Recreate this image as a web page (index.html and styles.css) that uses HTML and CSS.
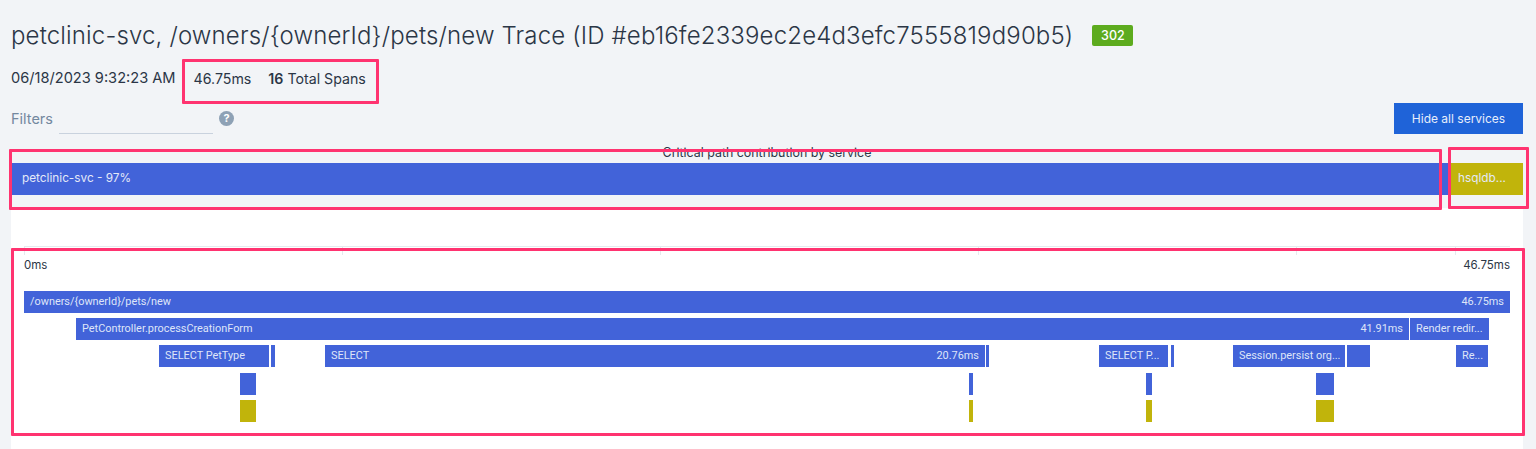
FILE: index.html
```html
<!DOCTYPE html>
<html lang="en">
<head>
<meta charset="utf-8">
<title>Trace</title>
<link rel="stylesheet" href="styles.css">
</head>
<body>
<main class="page">
  <header class="head">
    <h1 class="title">petclinic-svc, /owners/{ownerId}/pets/new Trace (ID #eb16fe2339ec2e4d3efc7555819d90b5)</h1>
    <span class="status">302</span>
  </header>
  <div class="meta">
    <span class="date">06/18/2023 9:32:23 AM</span>
    <span class="duration">46.75ms</span>
    <span class="spans"><b>16</b> Total Spans</span>
  </div>
  <div class="filters">
    <label class="filter-label">Filters</label>
    <span class="filter-input"></span>
    <span class="help">?</span>
    <button class="hide-btn">Hide all services</button>
  </div>
  <section class="critical">
    <div class="critical-title">Critical path contribution by service</div>
    <div class="critical-bar">
      <div class="seg seg-main">petclinic-svc - 97%</div>
      <div class="seg seg-db">hsqldb...</div>
    </div>
  </section>
  <section class="trace">
    <div class="ticks">
      <i class="tick" style="left:0"></i>
      <i class="tick" style="left:318px"></i>
      <i class="tick" style="left:636px"></i>
      <i class="tick" style="left:954px"></i>
      <i class="tick" style="left:1272px"></i>
      <i class="tick" style="left:1431px"></i>
    </div>
    <div class="scale"><span>0ms</span><span>46.75ms</span></div>
    <div class="rows">
      <div class="row">
        <div class="span" style="left:0;width:1486px"><span class="name">/owners/{ownerId}/pets/new</span><span>46.75ms</span></div>
      </div>
      <div class="row">
        <div class="span" style="left:52px;width:1333px"><span class="name">PetController.processCreationForm</span><span>41.91ms</span></div>
        <div class="span" style="left:1386px;width:79px"><span class="name">Render redir...</span></div>
      </div>
      <div class="row">
        <div class="span" style="left:135px;width:110px"><span class="name">SELECT PetType</span></div>
        <div class="span" style="left:247px;width:4px"></div>
        <div class="span" style="left:301px;width:660px"><span class="name">SELECT</span><span>20.76ms</span></div>
        <div class="span" style="left:962px;width:3px"></div>
        <div class="span" style="left:1075px;width:69px"><span class="name">SELECT P...</span></div>
        <div class="span" style="left:1147px;width:3px"></div>
        <div class="span" style="left:1209px;width:112px"><span class="name">Session.persist org...</span></div>
        <div class="span" style="left:1323px;width:23px"></div>
        <div class="span" style="left:1432px;width:32px"><span class="name">Re...</span></div>
      </div>
      <div class="row">
        <div class="span" style="left:216px;width:16px"></div>
        <div class="span" style="left:945px;width:4px"></div>
        <div class="span" style="left:1122px;width:6px"></div>
        <div class="span" style="left:1292px;width:18px"></div>
      </div>
      <div class="row">
        <div class="span db" style="left:216px;width:16px"></div>
        <div class="span db" style="left:945px;width:4px"></div>
        <div class="span db" style="left:1122px;width:6px"></div>
        <div class="span db" style="left:1292px;width:18px"></div>
      </div>
    </div>
  </section>
</main>
<div class="mark m1"></div>
<div class="mark m2"></div>
<div class="mark m3"></div>
<div class="mark m4"></div>
</body>
</html>
```
FILE: styles.css
```css
* { box-sizing: border-box; }
html, body { margin: 0; height: 449px; overflow: hidden; }
body { background: #f2f4f7; color: #2b3646; font-family: Inter, "Liberation Sans", sans-serif; position: relative; }
.page { padding: 0 13px 0 11px; }
.head { display: flex; align-items: center; height: 70px; gap: 19px; }
.title { margin: 0; font-size: 24px; font-weight: 300; color: #2b3646; white-space: nowrap; letter-spacing: 0.15px; }
.status { background: #5dab1e; color: #fff; font-size: 12.5px; font-weight: 500; width: 41px; height: 21px; border-radius: 2px; display: flex; align-items: center; justify-content: center; }
.meta { display: flex; height: 18px; align-items: center; font-size: 14.2px; color: #2b3646; margin-top: -1px; }
.date { font-size: 14.6px; }
.duration { margin-left: 18px; }
.spans { margin-left: 17px; }
.spans b { font-weight: 600; }
.filters { display: flex; align-items: center; height: 32px; margin-top: 15px; }
.filter-label { font-size: 14.5px; color: #74889f; width: 48px; }
.filter-input { width: 154px; height: 32px; border-bottom: 1px solid #c9d2de; }
.help { width: 15px; height: 15px; margin-left: 6px; border-radius: 50%; background: #8ea1b5; color: #fff; font-size: 11px; font-weight: 700; display: flex; align-items: center; justify-content: center; }
.hide-btn { margin-left: auto; width: 129px; height: 31px; background: #1f63d8; color: #e8eefb; border: 0; font: 400 12px Inter, "Liberation Sans", sans-serif; }
.critical { position: relative; height: 63px; margin-top: 12px; }
.critical-title { position: absolute; top: 0; left: 0; right: 0; text-align: center; font-size: 12.4px; line-height: 14px; color: #2b3646; }
.critical-bar { position: absolute; top: 16.5px; left: 0; right: 0; height: 32.5px; display: flex; }
.seg { display: flex; align-items: center; padding: 0 0 2px 11px; color: #e4e9f8; font-size: 11.8px; height: 100%; }
.seg-main { flex: 1; background: #4263d9; }
.seg-db { width: 73px; background: #c1b40b; padding-left: 8px; }
.trace { position: relative; background: #fff; height: 245px; margin-top: -1px; padding: 0 13px; }
.ticks { position: absolute; top: 38px; left: 13px; right: 13px; height: 8px; border-top: 1px solid #e6e9ee; }
.tick { position: absolute; top: 0; width: 1px; height: 8px; background: #e6e9ee; }
.scale { display: flex; justify-content: space-between; font-size: 11.5px; line-height: 16px; padding-top: 49px; color: #2b3646; }
.rows { display: flex; flex-direction: column; gap: 5.3px; margin-top: 17.7px; }
.row { position: relative; height: 22px; }
.span { position: absolute; top: 0; height: 22px; background: #4263d9; color: #dfe5f8; font-family: Roboto, "Liberation Sans", sans-serif; font-size: 10.9px; display: flex; align-items: center; justify-content: space-between; padding: 0 6px 1px; overflow: hidden; white-space: nowrap; }
.span:empty { padding: 0; }
.span.db { background: #c1b40b; }
.mark { position: absolute; border: 3px solid #ff3370; border-radius: 1px; }
.m1 { left: 182px; top: 59px; width: 197px; height: 45px; }
.m2 { left: 9px; top: 149px; width: 1433px; height: 61px; }
.m3 { left: 1448px; top: 147px; width: 81px; height: 62px; }
.m4 { left: 11px; top: 248px; width: 1514px; height: 188px; }
```
